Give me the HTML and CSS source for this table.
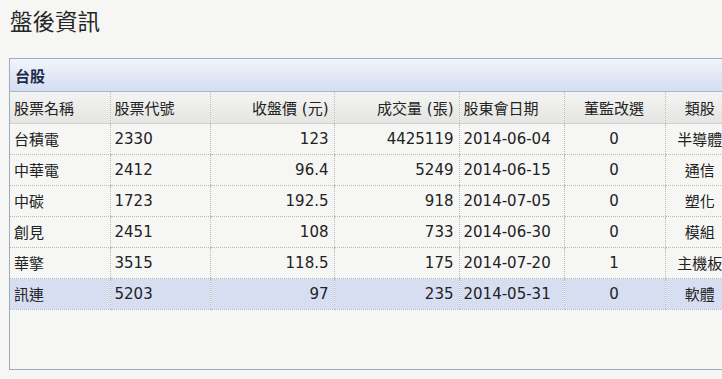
FILE: index.html
```html
<!DOCTYPE html>
<html lang="zh-Hant">
<head>
<meta charset="utf-8">
<title>盤後資訊</title>
<link rel="stylesheet" href="styles.css">
</head>
<body>
<div class="page">
  <h1 class="title">盤後資訊</h1>
  <div class="panel">
    <div class="caption">台股</div>
    <table class="grid">
      <colgroup>
        <col class="c1"><col class="c2"><col class="c3"><col class="c4"><col class="c5"><col class="c6"><col class="c7">
      </colgroup>
      <thead>
        <tr>
          <th class="l">股票名稱</th>
          <th class="l">股票代號</th>
          <th class="r">收盤價 (元)</th>
          <th class="r">成交量 (張)</th>
          <th class="l">股東會日期</th>
          <th class="c">董監改選</th>
          <th class="c">類股</th>
        </tr>
      </thead>
      <tbody>
        <tr><td class="l">台積電</td><td class="l">2330</td><td class="r">123</td><td class="r">4425119</td><td class="l">2014-06-04</td><td class="c">0</td><td class="c">半導體</td></tr>
        <tr><td class="l">中華電</td><td class="l">2412</td><td class="r">96.4</td><td class="r">5249</td><td class="l">2014-06-15</td><td class="c">0</td><td class="c">通信</td></tr>
        <tr><td class="l">中碳</td><td class="l">1723</td><td class="r">192.5</td><td class="r">918</td><td class="l">2014-07-05</td><td class="c">0</td><td class="c">塑化</td></tr>
        <tr><td class="l">創見</td><td class="l">2451</td><td class="r">108</td><td class="r">733</td><td class="l">2014-06-30</td><td class="c">0</td><td class="c">模組</td></tr>
        <tr><td class="l">華擎</td><td class="l">3515</td><td class="r">118.5</td><td class="r">175</td><td class="l">2014-07-20</td><td class="c">1</td><td class="c">主機板</td></tr>
        <tr class="sel"><td class="l">訊連</td><td class="l">5203</td><td class="r">97</td><td class="r">235</td><td class="l">2014-05-31</td><td class="c">0</td><td class="c">軟體</td></tr>
      </tbody>
    </table>
  </div>
</div>
</body>
</html>
```

FILE: styles.css
```css
html, body {
  margin: 0;
  padding: 0;
  background: #f6f6f4;
  overflow: hidden;
}

.page {
  width: 722px;
  height: 379px;
  padding: 5px 0 0 9px;
  box-sizing: border-box;
  overflow: hidden;
  font-family: "DejaVu Sans", "Noto Sans CJK TC", sans-serif;
  font-size: 15px;
  color: #222;
}

.title {
  margin: 0;
  height: 45px;
  font-family: "Noto Sans CJK TC", serif;
  font-weight: normal;
  font-size: 22.5px;
  line-height: 30px;
  color: #262626;
  padding-left: 1px;
}

.panel {
  margin-top: 8px;
  width: 740px;
  height: 312px;
  border: 1px solid #9aaebf;
  box-sizing: border-box;
  background: #f6f6f4;
}

.caption {
  height: 33px;
  line-height: 33px;
  padding-left: 5px;
  font-family: "Noto Sans CJK TC", sans-serif;
  font-weight: bold;
  font-size: 15px;
  color: #1e2c4c;
  background: linear-gradient(#f3f5fb, #d4ddf3);
  border-bottom: 1px solid #a9b9cc;
  box-sizing: border-box;
}

.grid {
  border-collapse: collapse;
  table-layout: fixed;
  width: 725px;
}

.c1 { width: 100px; }
.c2 { width: 100px; }
.c3 { width: 124px; }
.c4 { width: 125px; }
.c5 { width: 105px; }
.c6 { width: 101px; }
.c7 { width: 70px; }

.grid th,
.grid td {
  height: 31px;
  padding: 0 5px 0 4px;
  box-sizing: border-box;
  white-space: nowrap;
  overflow: hidden;
  border-left: 1px dotted #b9b9b9;
  border-bottom: 1px dotted #b9b9b9;
}

.grid th:first-child,
.grid td:first-child {
  border-left: none;
}

.grid th {
  font-weight: normal;
  font-family: "DejaVu Sans", "Noto Sans CJK TC", sans-serif;
  background: linear-gradient(#f4f4f3, #e4e4e2);
  border-bottom: 1px solid #d2d2d0;
  color: #222;
}

.grid td {
  font-size: 15px;
}

.l { text-align: left; }
.r { text-align: right; }
.c { text-align: center; }

.sel td {
  background: #d8def2;
}
```
